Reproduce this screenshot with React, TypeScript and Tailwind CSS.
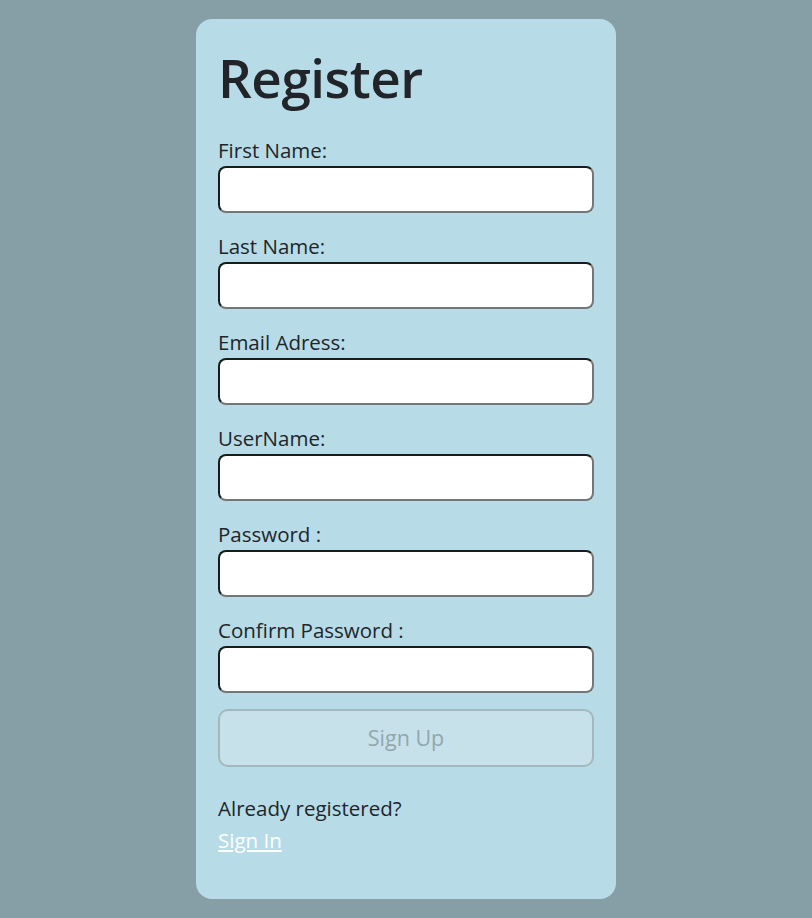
const fields = [
  { id: "firstname", label: "First Name:", type: "text" },
  { id: "lastname", label: "Last Name:", type: "text" },
  { id: "email", label: "Email Adress:", type: "email" },
  { id: "username", label: "UserName:", type: "text" },
  { id: "password", label: "Password :", type: "password" },
  { id: "confirm_pwd", label: "Confirm Password :", type: "password" }
]

export default function App() {
  return (
    <main
      className="flex min-h-screen items-center justify-center bg-[#869ea5] py-[19px] text-[#212529]"
      style={{ fontFamily: '"Open Sans", "Noto Sans", sans-serif' }}
    >
      <section className="flex h-[880px] w-[420px] flex-col rounded-2xl bg-[#b7dce7] px-[22px] pt-[27px]">
        <h1 className="mb-[28px] text-[53px] leading-[64px] font-semibold tracking-[-0.5px]">Register</h1>
        <form className="flex flex-col" onSubmit={(e) => e.preventDefault()}>
          {fields.map((f) => (
            <div key={f.id} className="mb-[21px] flex flex-col">
              <label htmlFor={f.id} className="mb-1 text-[20.5px] leading-[24px]">
                {f.label}
              </label>
              <input
                id={f.id}
                type={f.type}
                autoComplete="off"
                className="h-[47px] rounded-lg border-2 border-t-[#1b1b1b] border-l-[#1b1b1b] border-r-[#767676] border-b-[#767676] bg-white px-2 text-[20px] outline-none"
              />
            </div>
          ))}
          <button
            type="submit"
            disabled
            className="-mt-[5px] h-[58px] rounded-[10px] border-2 border-[#a3b7bd] bg-[#c6e1ea] text-[21.5px] text-[#93a6ac]"
          >
            Sign Up
          </button>
        </form>
        <p className="mt-[27px] text-[20.5px] leading-[28px]">Already registered?</p>
        <p className="mt-[4px] text-[20.5px] leading-[28px]">
          <a href="#" className="text-white underline">
            Sign In
          </a>
        </p>
      </section>
    </main>
  )
}
